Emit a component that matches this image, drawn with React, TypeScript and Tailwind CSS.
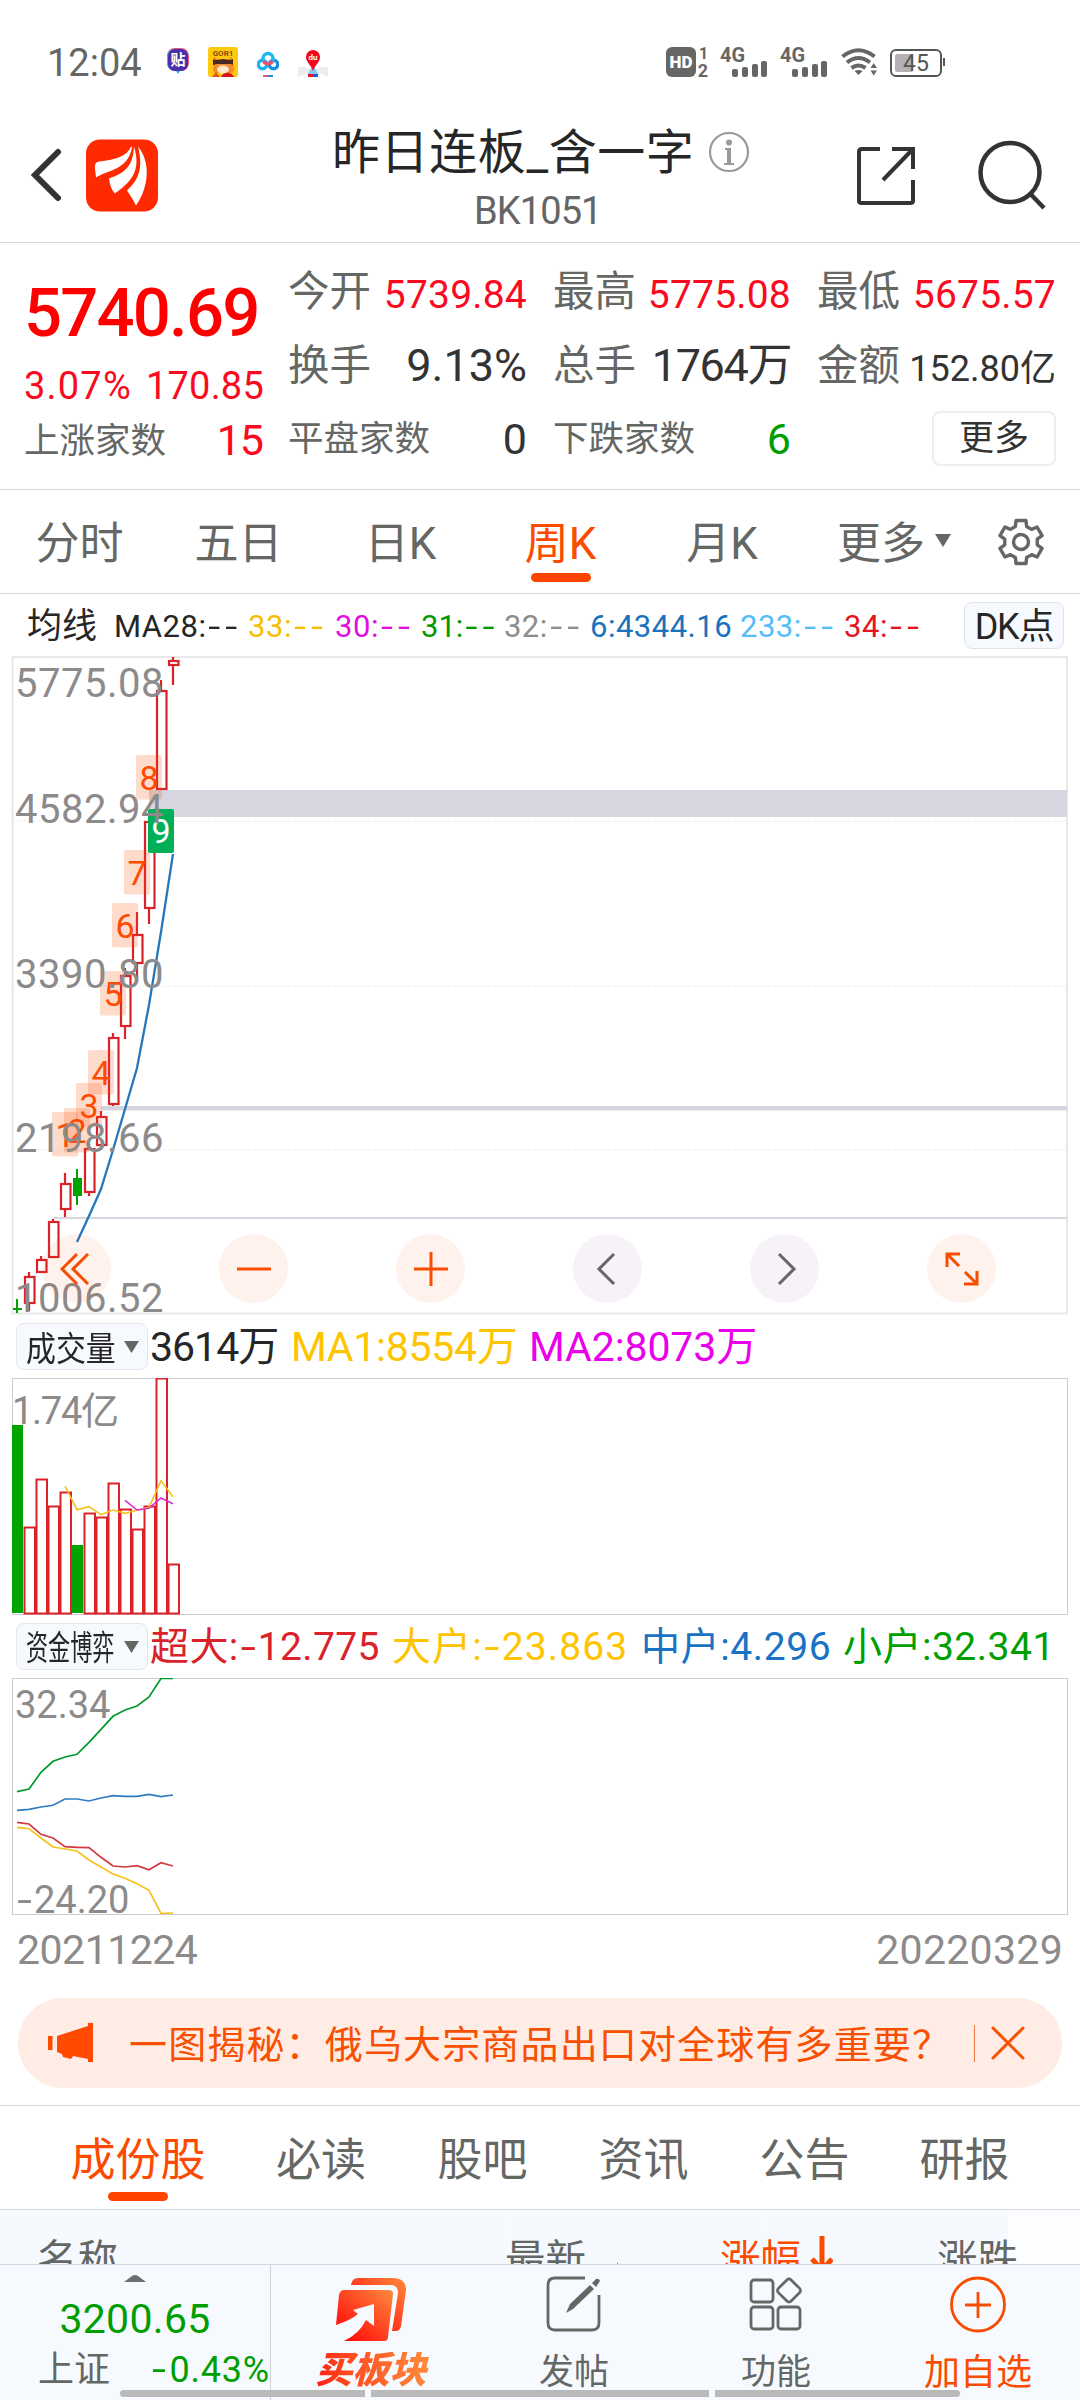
import type { ReactNode } from "react";

const RED = "#d9222a";
const GREEN = "#00a400";

// x of the first bar and the distance between two weeks
const X0 = 17;
const STEP = 12;

// [wick top, body top, body bottom, wick bottom]
const candles = [
  [1299, 1309, 1309, 1313],
  [1272, 1277, 1303, 1311],
  [1256, 1260, 1272, 1272],
  [1219, 1222, 1257, 1257],
  [1173, 1184, 1209, 1217],
  [1169, 1178, 1196, 1205],
  [1144, 1149, 1192, 1196],
  [1111, 1117, 1145, 1150],
  [1033, 1038, 1104, 1106],
  [968, 976, 1026, 1039],
  [912, 935, 963, 981],
  [821, 822, 908, 924],
  [680, 691, 789, 789],
  [657, 661, 665, 685],
];

const volumes = [1425, 1527, 1479, 1506, 1492, 1545, 1513, 1517, 1483, 1509, 1529, 1506, 1378, 1564];

const marks = [
  { n: 1, x: 52, y: 1112 },
  { n: 2, x: 64, y: 1108 },
  { n: 3, x: 76, y: 1083 },
  { n: 4, x: 88, y: 1050 },
  { n: 5, x: 100, y: 971 },
  { n: 6, x: 112, y: 903 },
  { n: 7, x: 124, y: 850 },
  { n: 8, x: 136, y: 755 },
];

const axis = [
  { t: "5775.08", y: 697 },
  { t: "4582.94", y: 823 },
  { t: "3390.80", y: 988 },
  { t: "2198.66", y: 1152 },
  { t: "1006.52", y: 1312 },
];

const flows = [
  { color: "#009a2a", ys: [1791.7, 1789, 1772.3, 1761.3, 1757, 1754.3, 1742.3, 1729.3, 1716.3, 1710, 1706, 1697, 1678.5, 1678.5] },
  { color: "#2f7cc4", ys: [1810.3, 1809.3, 1807, 1805.3, 1799, 1799, 1801, 1798, 1795.7, 1796.3, 1796.3, 1794.3, 1796.7, 1795] },
  { color: "#d0393f", ys: [1822.3, 1824, 1834.3, 1838, 1846.7, 1847.3, 1847.7, 1857.3, 1866, 1867, 1865.7, 1869.7, 1862.7, 1866] },
  { color: "#f5c21b", ys: [1827.3, 1828.7, 1838, 1847, 1849, 1851, 1860, 1867, 1874, 1878.3, 1883.7, 1890.3, 1913.5, 1913] },
];

const line = (ys: number[], from = 0) =>
  ys.map((y, i) => `${X0 + (from + i) * STEP},${y}`).join(" ");

const gearPoints = Array.from({ length: 6 }, (_, i) => {
  const a = -90 + i * 60;
  return [
    [a - 20, 16.5],
    [a - 13, 22],
    [a + 13, 22],
    [a + 20, 16.5],
  ]
    .map(([deg, r]) => {
      const rad = (deg * Math.PI) / 180;
      return `${24 + r * Math.cos(rad)},${24 + r * Math.sin(rad)}`;
    })
    .join(" ");
}).join(" ");

function StatusBar() {
  return (
    <div className="flex h-[124px] items-center pl-[47px] text-[#656765]">
      <span className="w-[120px] pt-[1px] text-[38px] leading-none">12:04</span>
      <svg className="h-[30px] w-[22px]" viewBox="0 0 22 30">
        <rect x="0" y="1" width="22" height="23" rx="8" fill="#e8537e" />
        <rect x="0" y="2" width="20" height="22" rx="8" fill="#35b6f0" />
        <path d="M8 22h6l-3 5z" fill="#1fa6ee" />
        <rect x="1" y="2" width="20" height="22" rx="7" fill="#4a2fa8" />
        <text x="11" y="18" fontSize="15" fontWeight="700" textAnchor="middle" fill="#fff">贴</text>
      </svg>
      <svg className="ml-[19px] h-[30px] w-[30px]" viewBox="0 0 30 30">
        <rect width="30" height="30" rx="3" fill="#ffc90e" />
        <text x="15" y="9" fontSize="8" fontWeight="700" textAnchor="middle" fill="#8a4a10">GOR1</text>
        <path d="M5 12l3 1 7-1 7 1 3-1v6H5z" fill="#4a2a22" />
        <path d="M6 10l4 3H6zM24 10l-4 3h4z" fill="#f0701c" />
        <rect x="5" y="17" width="21" height="9" rx="4" fill="#f58a2d" />
        <ellipse cx="15" cy="22.500" rx="6" ry="4" fill="#ffe9c8" />
        <path d="M13 30c2-5 10-6 13 0z" fill="#d8131b" />
        <path d="M4 30l4-5 4 5z" fill="#e8541d" />
      </svg>
      <svg className="ml-[19px] h-[30px] w-[22px]" viewBox="0 0 22 30" fill="none" strokeWidth="3.4">
        <circle cx="5.5" cy="17.5" r="4.2" stroke="#19b4f0" />
        <circle cx="16.5" cy="17.5" r="4.2" stroke="#1592e8" />
        <circle cx="11" cy="11.5" r="5" stroke="#22b8ee" />
        <path d="M6.500 14a5 5 0 0 0 9 0" stroke="#ee4f6d" />
        <path d="M6 29h5" stroke="#e8537e" strokeWidth="2" />
        <path d="M11 29h5" stroke="#2b86dd" strokeWidth="2" />
      </svg>
      <svg className="ml-[19px] h-[30px] w-[30px]" viewBox="0 0 30 30">
        <path d="M0 20l8 0 5 4-13 6zM30 20h-8l-5 4 13 6z" fill="#ececec" />
        <path d="M13 21h4l4 7H9z" fill="#8cc8ee" />
        <path d="M10 27h5v3h-5z" fill="#e0182d" />
        <path d="M15 27h5v3h-5z" fill="#1b62d8" />
        <path d="M15 3a7 7 0 0 1 7 7c0 5-5 8-7 14-2-6-7-9-7-14a7 7 0 0 1 7-7z" fill="#f5061c" />
        <text x="15" y="13" fontSize="8" fontWeight="700" textAnchor="middle" fill="#fff">du</text>
      </svg>

      <svg className="ml-[338px] h-[32px] w-[44px] overflow-visible" viewBox="0 0 44 32" fill="#656765">
        <rect x="0" y="1" width="30" height="30" rx="6" />
        <text x="15" y="22" fontSize="17" fontWeight="900" textAnchor="middle" fill="#fff">HD</text>
        <text x="37.500" y="13" fontSize="16" fontWeight="700" textAnchor="middle">1</text>
        <text x="37" y="31" fontSize="18" fontWeight="700" textAnchor="middle">2</text>
      </svg>
      <Signal className="ml-[10px]" />
      <Signal className="ml-[12px]" />
      <svg className="ml-[13px] h-[30px] w-[38px]" viewBox="0 0 38 30" fill="none" stroke="#656765" strokeWidth="4">
        <path d="M1.500 9.500q16-12.500 32 0" />
        <path d="M6 15.500q11.500-9 23 0" />
        <path d="M10.500 21q7-5 14 0" />
        <path d="M13.500 24q4-2 8 0l-4 4z" fill="#656765" stroke="none" />
        <path d="M29.500 21l3.200-5 3.300 5zM29.500 23.500h6.500l-3.300 5z" fill="#656765" stroke="none" />
      </svg>
      <svg className="ml-[11px] h-[30px] w-[56px]" viewBox="0 0 56 30">
        <rect x="1" y="3" width="50" height="26" rx="5" fill="none" stroke="#555755" strokeWidth="2" />
        <rect x="5" y="7" width="18" height="18" rx="2" fill="#b5b0b4" />
        <path d="M54 11v8" stroke="#555755" strokeWidth="2" />
        <text x="26" y="24" fontSize="23" textAnchor="middle" fill="#555755">45</text>
      </svg>
    </div>
  );
}

function Signal({ className }: { className: string }) {
  return (
    <svg className={`h-[32px] w-[48px] overflow-visible ${className}`} viewBox="0 0 48 32" fill="#656765">
      <text x="0" y="16" fontSize="20" fontWeight="700" textLength="25" lengthAdjust="spacingAndGlyphs">4G</text>
      <rect x="12" y="23" width="6" height="8" rx="2" />
      <rect x="22" y="21" width="6" height="10" rx="2" />
      <rect x="32" y="18" width="6" height="13" rx="2" />
      <rect x="41" y="15" width="6" height="16" rx="2" />
    </svg>
  );
}

function Header() {
  return (
    <header className="flex h-[119px] items-start border-b border-[#d6d6e0] pl-[30px]">
      <svg className="mt-[24px] h-[54px] w-[32px]" viewBox="0 0 32 54" fill="none" stroke="#333" strokeWidth="6" strokeLinecap="round">
        <path d="M28 4L5 27l23 23" />
      </svg>
      <svg className="ml-[24px] mt-[15px] h-[73px] w-[72px]" viewBox="0 0 72 72">
        <rect width="72" height="72" rx="14" fill="#ff2a00" />
        <g fill="#fff">
          <path d="M45 7C41 17 30 20 13 22q-5 1-4 7l1 9C20 31 42 31 46 8z" />
          <path d="M48 7c-1 18-7 26-25 32q1 10 6 15C47 41 55 30 48 7z" />
          <path d="M52 7c5 20 2 32-11 44q5 7 9 15C59 54 68 27 52 7z" />
        </g>
      </svg>
      <div className="ml-[174px] flex flex-col">
        <div className="flex items-center">
          <h1 className="h-[56px] w-[363px] text-[48px] leading-[58px] tracking-[0.6px] text-[#262626] whitespace-nowrap">昨日连板_含一字</h1>
          <svg className="ml-[13px] h-[42px] w-[42px]" viewBox="0 0 42 42" fill="#999">
            <circle cx="21" cy="21" r="19" fill="none" stroke="#999" strokeWidth="2.200" />
            <circle cx="21" cy="11.500" r="3" />
            <path d="M17 17h6v15h3v2H16v-2h3V19h-2z" />
          </svg>
        </div>
        <span className="ml-[142px] mt-[12px] text-[38px] leading-none tracking-[-0.9px] text-[#656565]">BK1051</span>
      </div>
      <svg className="ml-[103px] mt-[20px] h-[64px] w-[64px]" viewBox="0 0 64 64" fill="none" stroke="#333" strokeWidth="4">
        <path d="M27 5H9q-3 0-3 3v49q0 2 3 2h48q3 0 3-2V36" />
        <path d="M39 5h21v20M59 6L30 36" />
      </svg>
      <svg className="ml-[58px] mt-[14px] h-[72px] w-[72px]" viewBox="0 0 72 72" fill="none" stroke="#333" strokeWidth="4.500">
        <circle cx="35" cy="34.500" r="29.500" />
        <path d="M54.500 55L69 70" />
      </svg>
    </header>
  );
}

function Stat({ label, small, children }: { label: string; small?: boolean; children: ReactNode }) {
  return (
    <div className="flex h-full items-center justify-between leading-none whitespace-nowrap">
      <span className={small ? "pt-[3px] text-[35.5px] text-[#656765]" : "pt-[2px] text-[41.5px] text-[#656765]"}>{label}</span>
      {children}
    </div>
  );
}

function Quote() {
  return (
    <section className="flex h-[247px] justify-between border-b border-[#d6d6e0] pt-[11px] pl-[24px] pr-[24px]">
      <div className="flex w-[240px] flex-col whitespace-nowrap leading-none">
        <span className="mt-[26px] text-[67px] font-medium tracking-[-1.8px] text-[#ff0000]">5740.69</span>
        <div className="mt-[20px] flex justify-between text-[38px] text-[#fa0a1e]">
          <span className="tracking-[1.2px]">3.07%</span>
          <span className="tracking-[0.2px]">170.85</span>
        </div>
        <div className="mt-[10px] h-[50px] w-[239px]">
          <Stat label="上涨家数" small>
            <span className="text-[43px] tracking-[-1px] text-[#fa0a1e]">15</span>
          </Stat>
        </div>
      </div>
      <div className="grid h-[221px] w-[768px] grid-cols-[239px_238px_239px] grid-rows-[74px_74px_73px] gap-x-[26px]">
        <Stat label="今开"><span className="pt-[8px] text-[39px] tracking-[0.2px] text-[#fa0a1e]">5739.84</span></Stat>
        <Stat label="最高"><span className="pt-[8px] text-[39px] tracking-[0.2px] text-[#fa0a1e]">5775.08</span></Stat>
        <Stat label="最低"><span className="pt-[8px] text-[39px] tracking-[0.2px] text-[#fa0a1e]">5675.57</span></Stat>
        <Stat label="换手"><span className="pt-[1px] text-[45px] text-[#333]">9.13%</span></Stat>
        <Stat label="总手"><span className="pt-[1px] text-[45px] tracking-[-1.4px] text-[#333]">1764万</span></Stat>
        <Stat label="金额"><span className="pt-[7px] text-[36px] text-[#333]">152.80亿</span></Stat>
        <Stat label="平盘家数" small><span className="pt-[1px] text-[43px] text-[#333]">0</span></Stat>
        <Stat label="下跌家数" small><span className="pt-[1px] text-[43px] text-[#009e00]">6</span></Stat>
        <div className="flex h-full items-center justify-end">
          <button className="flex h-[55px] w-[124px] items-center justify-center rounded-lg border-2 border-[#ededf2] text-[35px] leading-none text-[#333]">更多</button>
        </div>
      </div>
    </section>
  );
}

function KTabs() {
  return (
    <nav className="flex h-[104px] items-start border-b border-[#d6d6e0] text-[44px] leading-[108px] text-[#656765]">
      <span className="w-[159px] text-center">分时</span>
      <span className="w-[159px] text-center">五日</span>
      <span className="w-[165px] text-center">日K</span>
      <span className="flex w-[155px] flex-col items-center text-[#fc4b00]">
        <span className="h-[83px]">周K</span>
        <i className="h-[9px] w-[60px] rounded-full bg-[#ff4400]" />
      </span>
      <span className="w-[168px] text-center">月K</span>
      <span className="ml-[31px]">更多</span>
      <svg className="ml-[10px] mt-[44px] h-[14px] w-[16px]" viewBox="0 0 16 14"><path d="M0 0h16L8 13z" fill="#656765" /></svg>
      <svg className="ml-[46px] mt-[28px] h-[48px] w-[48px]" viewBox="0 0 48 48" fill="none" stroke="#656765" strokeWidth="3.400">
        <polygon points={gearPoints} strokeLinejoin="round" />
        <circle cx="24" cy="24" r="7.500" />
      </svg>
    </nav>
  );
}

// the hyphen of a quote is wider than the font's own
function Dash({ large }: { large?: boolean }) {
  return (
    <span className={large ? "inline-block w-[19px] scale-x-[1.4] text-center" : "inline-block w-[17px] scale-x-[1.4] text-center"}>-</span>
  );
}

function NoValue() {
  return (
    <>
      <Dash />
      <Dash />
    </>
  );
}

function MaRow() {
  return (
    <div className="flex h-[62px] items-center pt-[2px] text-[31px] leading-none whitespace-nowrap">
      <span className="ml-[27px] w-[87px] text-[35px] text-[#262626]">均线</span>
      <span className="w-[134px] tracking-[0.5px] text-[#262626]">MA28:<NoValue /></span>
      <span className="w-[87px] tracking-[0.6px] text-[#f7bd00]">33:<NoValue /></span>
      <span className="w-[86px] tracking-[0.6px] text-[#df0fdf]">30:<NoValue /></span>
      <span className="w-[83px] text-[#009a00]">31:<NoValue /></span>
      <span className="w-[86px] tracking-[0.4px] text-[#8c8c8c]">32:<NoValue /></span>
      <span className="w-[150px] tracking-[0.5px] text-[#1a72bd]">6:4344.16</span>
      <span className="w-[104px] tracking-[0.5px] text-[#56bdf7]">233:<NoValue /></span>
      <span className="w-[120px] tracking-[0.6px] text-[#e6141e]">34:<NoValue /></span>
      <button className="-mt-[1px] flex h-[47px] w-[100px] items-center justify-center rounded-lg border border-[#e2e2ee] bg-[#f6faff] pt-[2px] text-[36px] leading-none tracking-[-1.200px] text-[#262626]">DK点</button>
    </div>
  );
}

function RoundButton({ children, gray }: { children: ReactNode; gray?: boolean }) {
  return (
    <button className={`flex size-[69px] items-center justify-center rounded-full ${gray ? "bg-[#f6f2f8]" : "bg-[#ff4400]/[0.07]"}`}>
      <svg className="h-[34px] w-[34px]" viewBox="0 0 34 34" fill="none" stroke={gray ? "#656765" : "#f84c00"} strokeWidth="3">
        {children}
      </svg>
    </button>
  );
}

function KChart() {
  return (
    <div className="relative h-[659px]">
      <svg className="block h-[659px] w-[1080px]" viewBox="0 656 1080 659">
        <rect x="12.500" y="657" width="1054.500" height="656.500" fill="none" stroke="#e6e6e6" strokeWidth="1.800" />
        {[821, 986, 1150].map((y) => (
          <path key={y} d={`M13 ${y}H1066`} stroke="#f3f3f5" strokeWidth="1.500" strokeDasharray="3 2" />
        ))}
        <rect x="149" y="790" width="918" height="27" fill="#d6d6e0" />
        <rect x="101" y="1106" width="966" height="4.500" fill="#d6d6e0" />
        <rect x="53" y="1217" width="1014" height="2" fill="#d6d6e0" />
        {candles.map(([hi, top, bottom, lo], i) => {
          const x = X0 + i * STEP;
          if (i === 0)
            return <path key={i} d={`M${x} ${hi}V${lo}M${x - 4} ${top}h9`} stroke={GREEN} strokeWidth="2" />;
          if (i === 5)
            return (
              <g key={i} fill={GREEN}>
                <rect x={x - 1} y={hi} width="2" height={lo - hi} />
                <rect x={x - 4} y={top} width="9" height={bottom - top} />
              </g>
            );
          return (
            <g key={i} stroke={RED} strokeWidth="2.200" fill="none">
              <path d={`M${x} ${hi}V${top}M${x} ${bottom}V${lo}`} />
              <rect x={x - 4} y={top} width="9.500" height={bottom - top} fill="#fff" />
            </g>
          );
        })}
        <polyline points={line([1242, 1216, 1189, 1150, 1109, 1068, 1005, 932, 854], 5)} fill="none" stroke="#2577bb" strokeWidth="2.300" />
        {marks.map((m) => (
          <g key={m.n}>
            <rect x={m.x} y={m.y} width="26" height="44.500" rx="2" fill="#ff4a00" fillOpacity="0.2" />
            <text x={m.x + 13} y={m.y + 35} fontSize="34" textAnchor="middle" fill="#ff4a00">{m.n}</text>
          </g>
        ))}
        <rect x="148" y="809" width="26" height="44" rx="2" fill="#00b058" />
        <text x="161" y="843" fontSize="34" textAnchor="middle" fill="#fff">9</text>
        {axis.map((a) => (
          <text key={a.t} x="15" y={a.y} fontSize="40" letterSpacing="0.5" fill="#8c8a8a">{a.t}</text>
        ))}
      </svg>
      {/* chart controls float over the lower part of the candles */}
      <div className="absolute bottom-[12px] left-[42px] flex gap-[108px]">
        <RoundButton><path d="M17 2L2 17l15 15M28 2L13 17l15 15" /></RoundButton>
        <RoundButton><path d="M0 17h34" /></RoundButton>
        <RoundButton><path d="M0 17h34M17 0v34" /></RoundButton>
        <RoundButton gray><path d="M23 2L8 17l15 15" /></RoundButton>
        <RoundButton gray><path d="M11 2l15 15-15 15" /></RoundButton>
        <RoundButton><path d="M2 15V2h13M2 2l12 12M32 19v13H19M32 32L20 20" /></RoundButton>
      </div>
    </div>
  );
}

function Picker({ children }: { children: ReactNode }) {
  return (
    <button className="ml-[16px] flex h-[47px] w-[132px] shrink-0 items-center rounded-lg border border-[#e6e4ee] bg-[#f6faff] pl-[9px] text-[#262626]">
      <span className="w-[88px] pt-[1px] text-left">{children}</span>
      <svg className="ml-[10px] h-[13px] w-[15px]" viewBox="0 0 15 13"><path d="M0 1h15L7.500 13z" fill="#656765" /></svg>
    </button>
  );
}

function VolumeChart() {
  return (
    <>
      <div className="flex h-[63px] items-center text-[41px] leading-none whitespace-nowrap">
        <Picker>
          <span className="inline-block origin-left scale-x-[0.88] text-[34px]">成交量</span>
        </Picker>
        <span className="ml-[2px] w-[141px] pt-[2px] tracking-[-1px] text-[#262626]">3614万</span>
        <span className="w-[238px] pt-[2px] tracking-[-0.3px] text-[#ffc400]">MA1:8554万</span>
        <span className="pt-[2px] tracking-[-0.1px] text-[#ea00ea]">MA2:8073万</span>
      </div>
      <svg className="block h-[237px] w-[1080px]" viewBox="0 1378 1080 237">
        <rect x="12.500" y="1378.500" width="1055" height="236" fill="none" stroke="#ccc" />
        {volumes.map((top, i) => {
          const x = 12 + i * STEP;
          return i === 0 || i === 5 ? (
            <rect key={i} x={x} y={top} width="11" height={1613 - top} fill={GREEN} />
          ) : (
            <rect key={i} x={x + 0.5} y={top + 0.5} width="10.500" height={1613 - top} fill="none" stroke={RED} strokeWidth="2" />
          );
        })}
        <polyline points={line([1486, 1509.7, 1506.7, 1514.7, 1510, 1513.3, 1510.3, 1507.3, 1480.7, 1496.7], 4)} fill="none" stroke="#f5c21b" strokeWidth="1.600" />
        <polyline points={line([1500.3, 1510, 1508.3, 1498, 1503.7], 9)} fill="none" stroke="#dd2bd6" strokeWidth="1.600" />
        <text x="12" y="1424" fontSize="38" fill="#8c8a8a" textLength="107">1.74亿</text>
      </svg>
    </>
  );
}

function FlowChart() {
  return (
    <>
      <div className="flex h-[63px] items-center text-[39px] leading-none whitespace-nowrap">
        <Picker>
          <span className="inline-block origin-left scale-x-[0.65] text-[34px]">资金博弈</span>
        </Picker>
        <span className="ml-[2px] w-[242px] pt-[2px] tracking-[0.4px] text-[#d9222a]">超大:<Dash large />12.775</span>
        <span className="w-[249px] pt-[2px] tracking-[1.1px] text-[#ffc400]">大户:<Dash large />23.863</span>
        <span className="w-[202px] pt-[2px] tracking-[0.6px] text-[#1a72c4]">中户:4.296</span>
        <span className="pt-[2px] tracking-[0.5px] text-[#009e00]">小户:32.341</span>
      </div>
      <div className="relative h-[237px]">
        <svg className="block h-[237px] w-[1080px]" viewBox="0 1678 1080 237">
          <rect x="12.500" y="1678.500" width="1055" height="236" fill="none" stroke="#ccc" />
          <text x="15" y="1718" fontSize="38" fill="#8c8a8a">32.34</text>
          {flows.map((f) => (
            <polyline key={f.color} points={line(f.ys)} fill="none" stroke={f.color} strokeWidth="1.700" />
          ))}
        </svg>
        <span className="absolute bottom-[-4px] left-[15px] text-[38px] leading-none text-[#8c8a8a]"><Dash large />24.20</span>
      </div>
      <div className="flex h-[69px] items-center justify-between pl-[17px] pr-[17px] pt-[1px] text-[41px] leading-none text-[#8c8a8a]">
        <span className="tracking-[-0.5px]">20211224</span>
        <span className="tracking-[0.3px]">20220329</span>
      </div>
    </>
  );
}

function Banner() {
  return (
    <div className="mx-[18px] mt-[14px] mb-[17px] flex h-[90px] items-center rounded-full bg-[#ffece4]">
      <svg className="ml-[29px] h-[40px] w-[47px]" viewBox="0 0 47 40" fill="#ff4a00">
        <path d="M1 13h4.500v14H1zM10 13l31-10V0h5v39h-5v-3l-15-3-2 3-8-2-1-3-5-2z" />
      </svg>
      <span className="ml-[35px] w-[845px] pt-[3px] text-[38px] leading-none tracking-[1.15px] text-[#f85000] whitespace-nowrap">一图揭秘：俄乌大宗商品出口对全球有多重要？</span>
      <i className="h-[37px] w-px bg-[#f07a45]" />
      <svg className="ml-[16px] h-[34px] w-[34px]" viewBox="0 0 34 34" stroke="#f85000" strokeWidth="3" strokeLinecap="round">
        <path d="M2 2l30 30M32 2L2 32" />
      </svg>
    </div>
  );
}

function InfoTabs() {
  return (
    <nav className="flex h-[105px] border-y border-[#d6d6dc] pl-[54px] text-[45px] leading-[109px] text-[#656765]">
      <span className="flex w-[168px] flex-col items-center text-[#fc4b00]">
        <span className="h-[86px]">成份股</span>
        <i className="h-[9px] w-[60px] rounded-full bg-[#ff4400]" />
      </span>
      <span className="ml-[18px] w-[162px] text-center">必读</span>
      <span className="w-[161px] text-center">股吧</span>
      <span className="w-[161px] text-center">资讯</span>
      <span className="w-[161px] text-center">公告</span>
      <span className="w-[159px] text-center">研报</span>
    </nav>
  );
}

function ListHead() {
  return (
    <div className="flex h-[54px] items-start overflow-hidden bg-gradient-to-r from-[#f6faff] from-[93.3%] to-[#fcfdff] to-[93.3%] pt-[28px] pl-[37px] text-[40.5px] leading-[44px] text-[#656765] whitespace-nowrap">
      <span className="w-[468px]">名称</span>
      <span className="w-[109px]">最新</span>
      <svg className="-mt-[1px] h-[44px] w-[106px]" viewBox="0 0 106 44"><path d="M0 33l4-8v8z" fill="#656765" /></svg>
      <span className="w-[89px] text-[#fc4b00]">涨幅</span>
      <svg className="-mt-[2px] mr-[104px] h-[44px] w-[24px]" viewBox="0 0 24 44" fill="none" stroke="#fc4b00" strokeWidth="5">
        <path d="M13 0v38M3 23l10 11 10-11" />
      </svg>
      <span>涨跌</span>
    </div>
  );
}

function BottomBar() {
  return (
    <footer className="relative flex h-[136px] border-t border-[#d6d6e0] bg-[#f6faff] leading-none whitespace-nowrap">
      <div className="flex w-[271px] flex-col items-center border-r border-[#d0d2da]">
        <svg className="mt-[9px] h-[8px] w-[22px]" viewBox="0 0 22 8"><path d="M0 8l8-6q3-2 6 0l8 6z" fill="#6b6e73" /></svg>
        <span className="mt-[17px] text-[41px] tracking-[0.3px] text-[#009e00]">3200.65</span>
        <div className="mt-[12px] flex w-full items-center justify-between pl-[38px] text-[36px] text-[#656765]">
          <span>上证</span>
          <span className="tracking-[0.8px] text-[#009e00]"><Dash large />0.43%</span>
        </div>
      </div>
      <div className="flex w-[200px] flex-col items-center">
        <svg className="mt-[12px] h-[65px] w-[72px]" viewBox="0 0 72 65">
          <defs>
            <linearGradient id="buy" x1="0" y1="1" x2="1" y2="0">
              <stop offset="0.1" stopColor="#ff0a0a" />
              <stop offset="1" stopColor="#ff8a3c" />
            </linearGradient>
          </defs>
          <g fill="url(#buy)">
            <path d="M16 8q1-7 7-7h35q13 0 13 12l-5 36q-1 5-5 5h-4l6-38q0-8-7-8z" />
            <path d="M9 13h45q4 0 4 4l-5 43q0 4-4 4H9q15-7 22-21l8 6V27l-21 6 5 4Q16 43 1 48l3-30q1-5 5-5z" />
          </g>
        </svg>
        <span className="mt-[10px] bg-gradient-to-r from-[#ff0f0f] to-[#ff8a3c] bg-clip-text px-[4px] text-[37px] font-black italic text-transparent">买板块</span>
      </div>
      <div className="ml-[4px] flex w-[198px] flex-col items-center text-[35px] text-[#656765]">
        <svg className="mt-[11px] h-[56px] w-[56px]" viewBox="0 0 56 56" fill="none" stroke="#656765" strokeWidth="2.800">
          <path d="M39 2H9Q2 2 2 9v38q0 7 7 7h37q7 0 7-7V19" />
          <path d="M20 37l4-9L44 9l4 4-21 20z" fill="#656765" stroke="none" />
          <path d="M46 7l4-4q3-1 4 2l-4 6z" fill="#656765" stroke="none" />
        </svg>
        <span className="mt-[23px]">发帖</span>
      </div>
      <div className="flex w-[206px] flex-col items-center text-[35px] text-[#656765]">
        <svg className="mt-[12px] h-[54px] w-[54px]" viewBox="0 0 54 54" fill="none" stroke="#656765" strokeWidth="2.800">
          <rect x="2" y="3" width="22" height="22" rx="3" />
          <rect x="2" y="30" width="22" height="22" rx="3" />
          <rect x="29" y="30" width="22" height="22" rx="3" />
          <rect x="31" y="4.500" width="18" height="18" rx="3" transform="rotate(45 40 13.500)" />
        </svg>
        <span className="mt-[24px]">功能</span>
      </div>
      <div className="flex w-[198px] flex-col items-center text-[36px] text-[#fc4b00]">
        <svg className="mt-[11px] h-[58px] w-[58px]" viewBox="0 0 58 58" fill="none" stroke="#f84c00" strokeWidth="2.800">
          <circle cx="29" cy="28.500" r="26.500" />
          <path d="M16 29h26M29 16v26" />
        </svg>
        <span className="mt-[21px]">加自选</span>
      </div>
      {/* system gesture hint */}
      <div className="absolute bottom-[3px] left-[120px] flex gap-[6px]">
        <i className="h-[7px] w-[245px] rounded-l-full bg-[#b9b9b9]" />
        <i className="h-[7px] w-[338px] bg-[#b9b9b9]" />
        <i className="h-[7px] w-[245px] rounded-r-full bg-[#b9b9b9]" />
      </div>
    </footer>
  );
}

export default function App() {
  return (
    <main className="h-[2400px] w-[1080px] overflow-hidden bg-white font-['Roboto','Noto_Sans_CJK_SC',sans-serif]">
      <StatusBar />
      <Header />
      <Quote />
      <KTabs />
      <MaRow />
      <KChart />
      <VolumeChart />
      <FlowChart />
      <Banner />
      <InfoTabs />
      <ListHead />
      <BottomBar />
    </main>
  );
}
